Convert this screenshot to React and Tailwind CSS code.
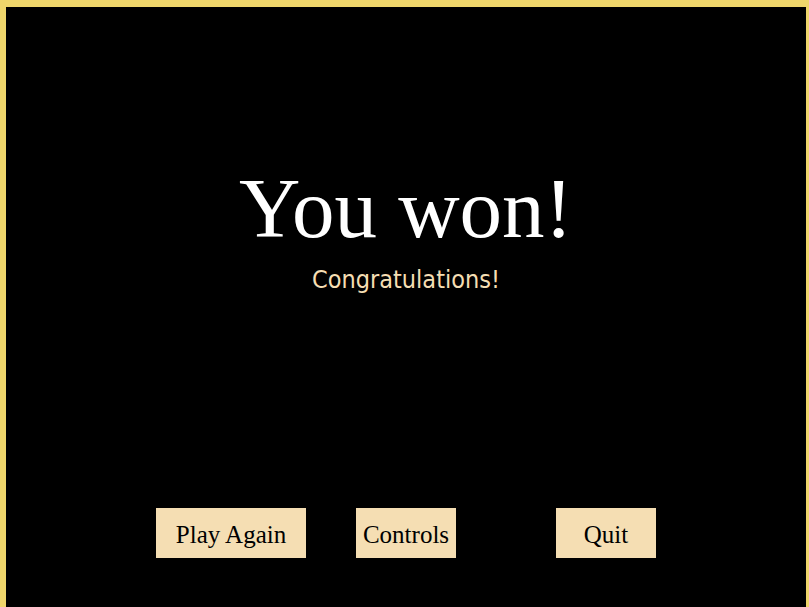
export default function App() {
  return (
    <div className="w-screen h-screen overflow-hidden bg-black">
      <div className="w-[812px] h-[620px] border-x-[6px] border-t-[7px] border-[#efd66b] bg-black">
        <div className="w-[800px] h-[600px] bg-black flex flex-col">
          <h1
            className="mt-[157px] text-center text-white text-[85px] leading-[88px]"
            style={{ fontFamily: '"Liberation Serif", serif' }}
          >
            You won!
          </h1>
          <p
            className="mt-[12px] text-center text-[#f5deb3] text-[25px] leading-[32px]"
            style={{ fontFamily: '"Comic Sans MS", "DejaVu Sans Condensed", "DejaVu Sans", sans-serif' }}
          >
            Congratulations!
          </p>
          <div
            className="mt-[212px] flex pl-[150px] text-black text-[25px]"
            style={{ fontFamily: '"Liberation Serif", serif' }}
          >
            <button className="w-[150px] h-[50px] pt-[3px] bg-[#f5deb3]">Play Again</button>
            <button className="ml-[50px] w-[100px] h-[50px] pt-[3px] bg-[#f5deb3]">Controls</button>
            <button className="ml-[100px] w-[100px] h-[50px] pt-[3px] bg-[#f5deb3]">Quit</button>
          </div>
        </div>
      </div>
    </div>
  );
}
